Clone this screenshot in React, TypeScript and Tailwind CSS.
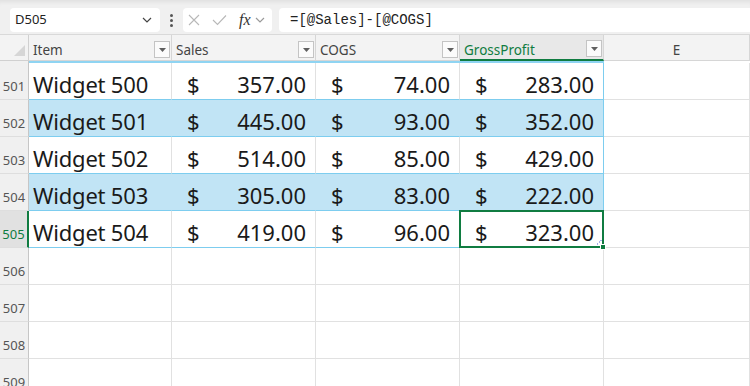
import React from "react";

const rows = [
  { n: 501, item: "Widget 500", s: "357.00", c: "74.00", g: "283.00" },
  { n: 502, item: "Widget 501", s: "445.00", c: "93.00", g: "352.00" },
  { n: 503, item: "Widget 502", s: "514.00", c: "85.00", g: "429.00" },
  { n: 504, item: "Widget 503", s: "305.00", c: "83.00", g: "222.00" },
  { n: 505, item: "Widget 504", s: "419.00", c: "96.00", g: "323.00" },
];

function Chevron({ className }: { className?: string }) {
  return (
    <svg width="10" height="6" viewBox="0 0 10 6" className={className}>
      <path d="M1 1 L5 5 L9 1" fill="none" stroke="currentColor" strokeWidth="1.2" />
    </svg>
  );
}

function FilterBtn() {
  return (
    <div className="w-[16px] h-[17px] mb-[2px] mr-[1px] bg-[#fbfbfb] border border-[#c4c4c4] flex items-center justify-center">
      <svg width="7" height="4" viewBox="0 0 7 4">
        <path d="M0 0 L7 0 L3.5 4 Z" fill="#5f5f5f" />
      </svg>
    </div>
  );
}

function Money({ v, band, last, selected }: { v: string; band: boolean; last?: boolean; selected?: boolean }) {
  return (
    <div
      className={
        "relative h-[37px] border-b border-b-[#7dcdef] flex items-end justify-between pl-[15px] pr-[9px] pb-[4px] leading-[22px] " +
        (band ? "bg-[#c1e4f5] " : "bg-white ") +
        (last ? "border-r border-r-[#7dcdef]" : band ? "border-r border-r-[#c1e4f5]" : "border-r border-r-[#e1e1e1]")
      }
    >
      <span>$</span>
      <span>{v}</span>
      {selected && (
        <>
          <div className="absolute -top-[1px] -left-[1px] -right-[1px] -bottom-[1px] border-2 border-[#107c41] pointer-events-none" />
          <svg width="5" height="5" viewBox="0 0 5 5" className="absolute right-[1px] bottom-[2px]">
            <path d="M4 0 L4 1 M2 2 L3 2 M0 4 L1 4" stroke="#4a62d6" strokeWidth="1" />
          </svg>
          <div className="absolute -right-[3px] -bottom-[3px] w-[6px] h-[6px] bg-[#107c41] border border-white" />
        </>
      )}
    </div>
  );
}

export default function App() {
  const font = "font-['Noto_Sans',sans-serif]";
  return (
    <div className={"w-[750px] h-[386px] overflow-hidden bg-white text-[#1a1a1a] " + font}>
      {/* formula bar */}
      <div className="h-[35px] bg-[#f0f0f0] border-b border-[#d9d9d9] flex items-start pt-[8px] shadow-[inset_0_5px_4px_-3px_rgba(0,0,0,0.07)]">
        <div className="ml-[10px] w-[150px] h-[24px] bg-white rounded-[4px] flex items-center justify-between pl-[5px] pr-[8px] text-[13px] text-[#222]">
          <span>D505</span>
          <Chevron className="text-[#444]" />
        </div>
        <div className="ml-[10px] h-[24px] flex flex-col justify-center gap-[2px]">
          <div className="w-[3px] h-[3px] rounded-full bg-[#555]" />
          <div className="w-[3px] h-[3px] rounded-full bg-[#555]" />
          <div className="w-[3px] h-[3px] rounded-full bg-[#555]" />
        </div>
        <div className="ml-[10px] w-[89px] h-[24px] bg-white rounded-[4px] flex items-center pl-[5px]">
          <svg width="12" height="12" viewBox="0 0 12 12">
            <path d="M1 1 L11 11 M11 1 L1 11" stroke="#b8b8b8" strokeWidth="1.1" fill="none" />
          </svg>
          <svg width="15" height="12" viewBox="0 0 15 12" className="ml-[12px]">
            <path d="M1 6 L5.5 10.5 L14 1.5" stroke="#b8b8b8" strokeWidth="1.1" fill="none" />
          </svg>
          <span className="ml-[12px] font-['Liberation_Serif',serif] italic text-[16px] leading-[16px] text-[#333]">
            fx
          </span>
          <Chevron className="ml-[4px] text-[#9a9a9a]" />
        </div>
        <div className="ml-[7px] flex-1 h-[24px] bg-white rounded-l-[4px] flex items-center pl-[11px] font-['Liberation_Mono',monospace] text-[14px] text-[#222]">
          =[@Sales]-[@COGS]
        </div>
      </div>

      {/* column headers */}
      <div className="grid grid-cols-[29px_143px_144px_144px_144px_146px] h-[26px] bg-[#f3f3f3] text-[13.5px] text-[#444]">
        <div className="border-r border-b border-[#d0d0d0] flex items-end justify-end pr-[3px] pb-[4px]">
          <svg width="11" height="11" viewBox="0 0 11 11">
            <path d="M11 0 L11 11 L0 11 Z" fill="#d6d6d6" />
          </svg>
        </div>
        {["Item", "Sales", "COGS"].map((h) => (
          <div key={h} className="border-r border-b border-[#d6d6d6] flex items-end justify-between pl-[4px]">
            <span className="pb-[3px] leading-[14px]">{h}</span>
            <FilterBtn />
          </div>
        ))}
        <div className="border-r border-r-[#d6d6d6] border-b-2 border-b-[#107c41] bg-[#e8e8e8] flex items-end justify-between pl-[4px]">
          <span className="pb-[2px] leading-[14px] text-[#107c41]">GrossProfit</span>
          <FilterBtn />
        </div>
        <div className="border-r border-b border-[#d6d6d6] flex items-end justify-center pb-[3px]">
          <span className="leading-[14px]">E</span>
        </div>
      </div>

      {/* table rows */}
      <div className="grid grid-cols-[29px_143px_144px_144px_144px_146px]">
        <div className="h-[2px] bg-[#f0f0f0] border-r border-[#c6c6c6]" />
        <div className="col-span-4 h-[2px] bg-[#8fd4f2]" />
        <div className="h-[2px] bg-white" />
        {rows.map((r, i) => {
          const band = i % 2 === 1;
          const sel = r.n === 505;
          return (
            <React.Fragment key={r.n}>
              <div
                className={
                  "h-[37px] border-b border-b-[#dedede] flex items-end justify-center pb-[6px] text-[13px] leading-[13px] " +
                  (sel
                    ? "bg-[#e1e1e1] text-[#107c41] border-r-2 border-r-[#107c41]"
                    : "bg-[#f0f0f0] text-[#555] border-r border-r-[#c6c6c6]")
                }
              >
                {r.n}
              </div>
              <div
                className={
                  "h-[37px] border-b border-b-[#7dcdef] flex items-end pl-[4px] pb-[4px] text-[22px] leading-[22px] tracking-[-0.2px] " +
                  (band ? "bg-[#c1e4f5] border-r border-r-[#c1e4f5]" : "bg-white border-r border-r-[#e1e1e1]")
                }
              >
                {r.item}
              </div>
              <div className="text-[22px]">
                <Money v={r.s} band={band} />
              </div>
              <div className="text-[22px]">
                <Money v={r.c} band={band} />
              </div>
              <div className="text-[22px]">
                <Money v={r.g} band={band} last selected={sel} />
              </div>
              <div className="h-[37px] border-b border-r border-[#e1e1e1] bg-white" />
            </React.Fragment>
          );
        })}
        {[506, 507, 508, 509].map((n) => (
          <React.Fragment key={n}>
            <div className="h-[37px] bg-[#f0f0f0] border-r border-r-[#c6c6c6] border-b border-b-[#dedede] flex items-end justify-center pb-[6px] text-[13px] leading-[13px] text-[#555]">
              {n}
            </div>
            {[0, 1, 2, 3, 4].map((c) => (
              <div key={c} className="h-[37px] border-b border-r border-[#e1e1e1] bg-white" />
            ))}
          </React.Fragment>
        ))}
      </div>
    </div>
  );
}
